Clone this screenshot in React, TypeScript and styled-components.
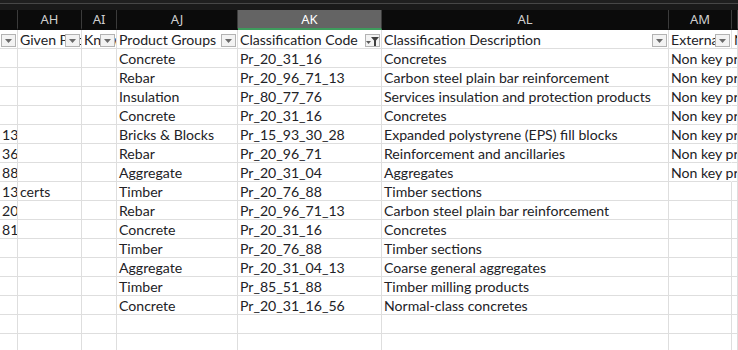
import React from 'react';
import styled, { createGlobalStyle } from 'styled-components';

const GlobalStyle = createGlobalStyle`
  html, body {
    margin: 0;
    padding: 0;
    background: #ffffff;
    overflow: hidden;
  }
`;

const COLS = '18px 64px 35px 121px 144px 287px 63px 1fr';

const Sheet = styled.div`
  width: 738px;
  height: 350px;
  overflow: hidden;
  background: #ffffff;
  font-family: 'Lato', 'Noto Sans', sans-serif;
`;

const TopStrip = styled.div`
  height: 3px;
  background: #1f1f1f;
  border-bottom: 1px solid #474747;
`;

const TopBand = styled.div`
  height: 6px;
  background: #1a1a1a;
`;

const Row = styled.div`
  display: grid;
  grid-template-columns: ${COLS};
  height: 19px;
`;

const HeaderRow = styled(Row)`
  height: 20px;
  background: #0b0b0b;
`;

const ColHead = styled.div<{ $active?: boolean }>`
  box-sizing: border-box;
  border-right: 1px solid #3b3b3b;
  background: ${(p) => (p.$active ? '#646464' : 'transparent')};
  border-bottom: 2px solid ${(p) => (p.$active ? '#3d9b5c' : '#0b0b0b')};
  color: ${(p) => (p.$active ? '#ffffff' : '#cfcfcf')};
  font-family: 'Noto Sans', sans-serif;
  font-size: 13px;
  line-height: 19px;
  text-align: center;
  overflow: hidden;
`;

const Cell = styled.div<{ $right?: boolean; $spill?: boolean }>`
  box-sizing: border-box;
  position: relative;
  border-right: 1px solid ${(p) => (p.$spill ? '#ffffff' : '#dedede')};
  border-bottom: 1px solid #dedede;
  padding: 1px 2px 0 2px;
  font-size: 14.1px;
  line-height: 17px;
  color: #222226;
  white-space: nowrap;
  text-align: ${(p) => (p.$right ? 'right' : 'left')};
  overflow: ${(p) => (p.$spill ? 'visible' : 'hidden')};
`;

const FilterCell = styled(Cell)`
  overflow: hidden;
`;

const DropButton = styled.div`
  position: absolute;
  right: 1px;
  top: 4px;
  width: 15px;
  height: 13px;
  box-sizing: border-box;
  border: 1px solid #b3b3b3;
  background: #f3f3f3;
  display: flex;
  align-items: center;
  justify-content: center;
`;

const Arrow = () => (
  <svg width="7" height="4" viewBox="0 0 7 4">
    <path d="M0 0 H7 L3.5 4 Z" fill="#6a6a6a" />
  </svg>
);

const FunnelIcon = () => (
  <svg width="13" height="10" viewBox="0 0 13 10">
    <path d="M0 5 H5 L2.5 8 Z" fill="#5a5a5a" />
    <path d="M5 1 H13 L10 4.5 V10 H8 V4.5 Z" fill="#3f3f3f" />
  </svg>
);

type FilterProps = { label?: string; filtered?: boolean };

const Filter: React.FC<FilterProps> = ({ label, filtered }) => (
  <FilterCell>
    {label}
    <DropButton>{filtered ? <FunnelIcon /> : <Arrow />}</DropButton>
  </FilterCell>
);

type DataRow = [string, string, string, string, string, string];

const rows: DataRow[] = [
  ['', '', 'Concrete', 'Pr_20_31_16', 'Concretes', 'Non key products'],
  ['', '', 'Rebar', 'Pr_20_96_71_13', 'Carbon steel plain bar reinforcement', 'Non key products'],
  ['', '', 'Insulation', 'Pr_80_77_76', 'Services insulation and protection products', 'Non key products'],
  ['', '', 'Concrete', 'Pr_20_31_16', 'Concretes', 'Non key products'],
  ['13', '', 'Bricks & Blocks', 'Pr_15_93_30_28', 'Expanded polystyrene (EPS) fill blocks', 'Non key products'],
  ['36', '', 'Rebar', 'Pr_20_96_71', 'Reinforcement and ancillaries', 'Non key products'],
  ['88', '', 'Aggregate', 'Pr_20_31_04', 'Aggregates', 'Non key products'],
  ['13', 'certs', 'Timber', 'Pr_20_76_88', 'Timber sections', ''],
  ['20', '', 'Rebar', 'Pr_20_96_71_13', 'Carbon steel plain bar reinforcement', ''],
  ['81', '', 'Concrete', 'Pr_20_31_16', 'Concretes', ''],
  ['', '', 'Timber', 'Pr_20_76_88', 'Timber sections', ''],
  ['', '', 'Aggregate', 'Pr_20_31_04_13', 'Coarse general aggregates', ''],
  ['', '', 'Timber', 'Pr_85_51_88', 'Timber milling products', ''],
  ['', '', 'Concrete', 'Pr_20_31_16_56', 'Normal-class concretes', ''],
  ['', '', '', '', '', ''],
  ['', '', '', '', '', ''],
];

const App: React.FC = () => (
  <Sheet>
    <GlobalStyle />
    <TopStrip />
    <TopBand />
    <HeaderRow>
      <ColHead />
      <ColHead>AH</ColHead>
      <ColHead>AI</ColHead>
      <ColHead>AJ</ColHead>
      <ColHead $active>AK</ColHead>
      <ColHead>AL</ColHead>
      <ColHead>AM</ColHead>
      <ColHead />
    </HeaderRow>
    <Row>
      <Filter />
      <Filter label="Given Price" />
      <Filter label="Known" />
      <Filter label="Product Groups" />
      <Filter label="Classification Code" filtered />
      <Filter label="Classification Description" />
      <Filter label="External" />
      <FilterCell>Notes</FilterCell>
    </Row>
    {rows.map((r, i) => {
      const spill = r[5] !== '';
      return (
        <Row key={i}>
          <Cell $right>{r[0]}</Cell>
          <Cell>{r[1]}</Cell>
          <Cell />
          <Cell>{r[2]}</Cell>
          <Cell>{r[3]}</Cell>
          <Cell>{r[4]}</Cell>
          <Cell $spill={spill}>{r[5]}</Cell>
          <Cell />
        </Row>
      );
    })}
  </Sheet>
);

export default App;
